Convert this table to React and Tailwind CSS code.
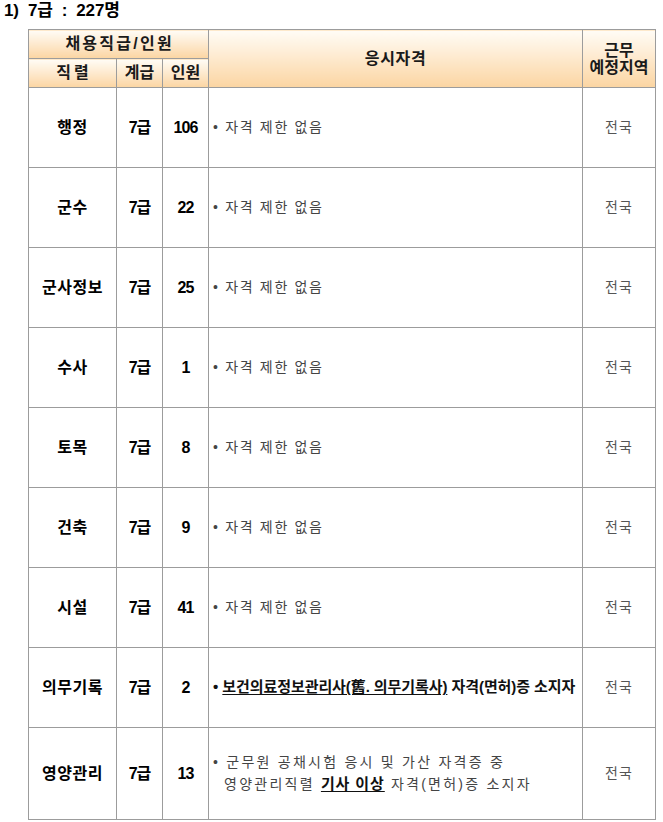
import React from "react";

const rows = [
  { name: "행정", n: "106" },
  { name: "군수", n: "22" },
  { name: "군사정보", n: "25" },
  { name: "수사", n: "1" },
  { name: "토목", n: "8" },
  { name: "건축", n: "9" },
  { name: "시설", n: "41" },
];

const hd =
  "border border-[#9c9c9c] bg-gradient-to-b from-[#fffcf6] to-[#fbd5a2] text-[16px] font-bold text-[#1a1a1a] text-center p-0";
const cell = "border border-[#9c9c9c] text-center p-0";
const nameCls = cell + " text-[16px] font-bold tracking-[0.03em]";
const numCls = cell + " text-[16px] font-bold tracking-[-0.06em]";
const areaCls = cell + " text-[14px] text-[#555] tracking-[0.08em]";

export default function App() {
  return (
    <div
      className="w-[663px] h-[822px] bg-white text-black"
      style={{ fontFamily: '"Liberation Sans", "Noto Sans CJK KR", sans-serif' }}
    >
      <div className="pl-[4px] h-[29px] text-[17px] font-bold leading-[21px] tracking-[-0.01em] whitespace-pre">
        {"1)  7급  :  227명"}
      </div>
      <table className="ml-[28px] border-collapse table-fixed w-[627px]">
        <colgroup>
          <col className="w-[88px]" />
          <col className="w-[46px]" />
          <col className="w-[46px]" />
          <col className="w-[374px]" />
          <col className="w-[73px]" />
        </colgroup>
        <thead>
          <tr className="h-[29px]">
            <th colSpan={3} className={hd + " tracking-[0.14em] pl-[0.14em]"}>
              채용직급/인원
            </th>
            <th rowSpan={2} className={hd + " tracking-[0.04em]"}>
              응시자격
            </th>
            <th rowSpan={2} className={hd + " leading-[17px]"}>
              근무
              <br />
              예정지역
            </th>
          </tr>
          <tr className="h-[29px]">
            <th className={hd + " tracking-[0.2em] pl-[0.2em]"}>직렬</th>
            <th className={hd}>계급</th>
            <th className={hd}>인원</th>
          </tr>
        </thead>
        <tbody>
          {rows.map((r) => (
            <tr key={r.name} className="h-[80px]">
              <td className={nameCls}>{r.name}</td>
              <td className={numCls}>7급</td>
              <td className={numCls}>{r.n}</td>
              <td className="border border-[#9c9c9c] pl-[4px] text-[14px] text-[#444] tracking-[0.12em]">
                • 자격 제한 없음
              </td>
              <td className={areaCls}>전국</td>
            </tr>
          ))}
          <tr className="h-[80px]">
            <td className="border border-[#9c9c9c] text-center p-0 text-[16px] font-bold tracking-[0.03em]">의무기록</td>
            <td className={numCls}>7급</td>
            <td className={numCls}>2</td>
            <td className="border border-[#9c9c9c] pl-[4px] text-[15px] font-bold text-[#111] tracking-[-0.005em] whitespace-nowrap">
              • <span className="underline underline-offset-2">보건의료정보관리사(舊. 의무기록사)</span> 자격(면허)증 소지자
            </td>
            <td className={areaCls}>전국</td>
          </tr>
          <tr className="h-[92px]">
            <td className={nameCls}>영양관리</td>
            <td className={numCls}>7급</td>
            <td className={numCls}>13</td>
            <td className="border border-[#9c9c9c] pl-[4px] text-[14px] text-[#444] tracking-[0.16em] leading-[21px] whitespace-nowrap">
              <div>• 군무원 공채시험 응시 및 가산 자격증 중</div>
              <div className="pl-[11px]">
                영양관리직렬{" "}
                <span className="font-bold text-[15px] text-[#111] tracking-[0.06em] underline underline-offset-2">
                  기사 이상
                </span>{" "}
                자격(면허)증 소지자
              </div>
            </td>
            <td className={areaCls}>전국</td>
          </tr>
        </tbody>
      </table>
    </div>
  );
}
